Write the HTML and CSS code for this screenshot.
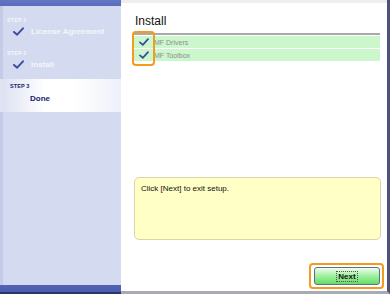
FILE: index.html
```html
<!DOCTYPE html>
<html>
<head>
<meta charset="utf-8">
<link rel="stylesheet" href="styles.css">
</head>
<body>
<div class="app">
  <aside class="sidebar">
    <div class="side-top"></div>
    <div class="step done first">
      <div class="step-label">STEP 1</div>
      <div class="step-name"><svg class="tick" viewBox="0 0 12 10"><path d="M1 5.5 L4.5 8.5 L11 1.5" fill="none" stroke="currentColor" stroke-width="2.2" stroke-linecap="round" stroke-linejoin="round"/></svg><span>License Agreement</span></div>
    </div>
    <div class="step done second">
      <div class="step-label">STEP 2</div>
      <div class="step-name"><svg class="tick" viewBox="0 0 12 10"><path d="M1 5.5 L4.5 8.5 L11 1.5" fill="none" stroke="currentColor" stroke-width="2.2" stroke-linecap="round" stroke-linejoin="round"/></svg><span>Install</span></div>
    </div>
    <div class="step current">
      <div class="step-label">STEP 3</div>
      <div class="step-name"><span>Done</span></div>
    </div>
    <div class="side-fill"></div>
    <div class="side-bottom"></div>
  </aside>
  <main class="main">
    <div class="main-top"></div>
    <h1 class="title">Install</h1>
    <div class="list">
      <div class="row"><svg class="tick row-tick" viewBox="0 0 12 10"><path d="M1 5.5 L4.5 8.5 L11 1.5" fill="none" stroke="currentColor" stroke-width="2.2" stroke-linecap="round" stroke-linejoin="round"/></svg><span>MF Drivers</span></div>
      <div class="row"><svg class="tick row-tick" viewBox="0 0 12 10"><path d="M1 5.5 L4.5 8.5 L11 1.5" fill="none" stroke="currentColor" stroke-width="2.2" stroke-linecap="round" stroke-linejoin="round"/></svg><span>MF Toolbox</span></div>
      <div class="mark mark-checks"></div>
    </div>
    <div class="spacer"></div>
    <div class="message">Click [Next] to exit setup.</div>
    <div class="actions">
      <div class="btn-wrap">
        <button class="btn"><span class="focus">Next</span></button>
      </div>
    </div>
  </main>
</div>
</body>
</html>
```
FILE: styles.css
```css
* { box-sizing: border-box; }
html, body { margin: 0; padding: 0; }
body {
  width: 391px;
  height: 294px;
  overflow: hidden;
  background: #fff;
  font-family: "Liberation Sans", Arial, sans-serif;
}
.app {
  display: flex;
  width: 391px;
  height: 294px;
}
.sidebar {
  width: 121px;
  height: 294px;
  display: flex;
  flex-direction: column;
  background: #d4daef;
  border-left: 3px solid #c4cbe6;
}
.side-top {
  height: 6px;
  margin-left: -3px;
  background: linear-gradient(#6275c4, #5a6cbc);
}
.step {
  padding: 11px 0 0 4px;
}
.step.first { height: 33px; }
.step.second { height: 40px; }
.step.done { color: #f4f6fc; }
.step-label {
  font-size: 5.5px;
  font-weight: bold;
  line-height: 6px;
  letter-spacing: 0.1px;
}
.step-name {
  display: flex;
  align-items: center;
  gap: 7px;
  margin-top: 4px;
  padding-left: 6px;
  font-size: 8px;
  font-weight: bold;
  line-height: 9px;
}
.tick {
  width: 11px;
  height: 9px;
  color: #3b4d9e;
  flex: none;
}
.step.current {
  margin-left: -3px;
  padding-left: 7px;
  padding-top: 4px;
  height: 33px;
  color: #1a2270;
  background: linear-gradient(to right, #dde2f3 0%, #ffffff 35%, #ffffff 60%, #eef1fa 100%);
  border-left: 3px solid #e0e4f2;
}
.step.current .step-name { padding-left: 20px; margin-top: 5px; }
.side-fill { flex: 1; }
.side-bottom {
  height: 9px;
  margin-left: -3px;
  background: linear-gradient(#5063b4 0, #4a5daf 75%, #2a3668 75%);
}
.main {
  flex: 1;
  display: flex;
  flex-direction: column;
  position: relative;
  border-right: 3px solid #4b5476;
  margin-right: 1px;
  border-bottom: 3px solid #a8aab4;
  padding-bottom: 2px;
}
.main-top {
  height: 3px;
  background: #eeeeee;
}
.title {
  margin: 11px 0 0 14px;
  font-size: 12px;
  font-weight: normal;
  line-height: 14px;
  color: #111;
}
.list {
  position: relative;
  margin: 5px 0 0 12px;
  width: 247px;
  border-top: 2px solid #a9a9a9;
  border-left: 1px solid #b5b5b5;
  padding-top: 1px;
}
.row {
  display: flex;
  align-items: center;
  gap: 5px;
  height: 12px;
  margin-bottom: 1px;
  padding-left: 5px;
  background: #ccf6cc;
  font-size: 7px;
  color: #8e8e8e;
}
.row-tick { width: 10px; height: 8px; }
.mark {
  position: absolute;
  border: 2px solid #f39b1e;
  border-radius: 4px;
}
.mark-checks {
  left: -2px;
  top: -4px;
  width: 23px;
  height: 35px;
}
.spacer { flex: 1; }
.message {
  margin-left: 13px;
  width: 247px;
  height: 63px;
  border: 1px solid #d6d6a8;
  border-radius: 5px;
  background: #ffffc6;
  padding: 6px 6px;
  font-size: 8px;
  line-height: 10px;
  color: #111;
}
.actions {
  display: flex;
  justify-content: flex-end;
  margin-top: 23px;
  margin-right: 3px;
  margin-bottom: 0;
}
.btn-wrap {
  border: 2px solid #f39b1e;
  border-radius: 4px;
  padding: 2px 2px 2px 3px;
}
.btn {
  display: flex;
  align-items: center;
  justify-content: center;
  width: 66px;
  height: 18px;
  border: 1px solid #5f6e86;
  border-radius: 3px;
  background: linear-gradient(#f2fff2 0%, #a6f0a6 45%, #62de62 100%);
  font-family: "Liberation Sans", Arial, sans-serif;
  font-size: 8px;
  font-weight: bold;
  color: #111;
  padding: 0;
}
.focus {
  border: 1px dotted #555;
  padding: 0 1px;
  line-height: 9px;
}
```
